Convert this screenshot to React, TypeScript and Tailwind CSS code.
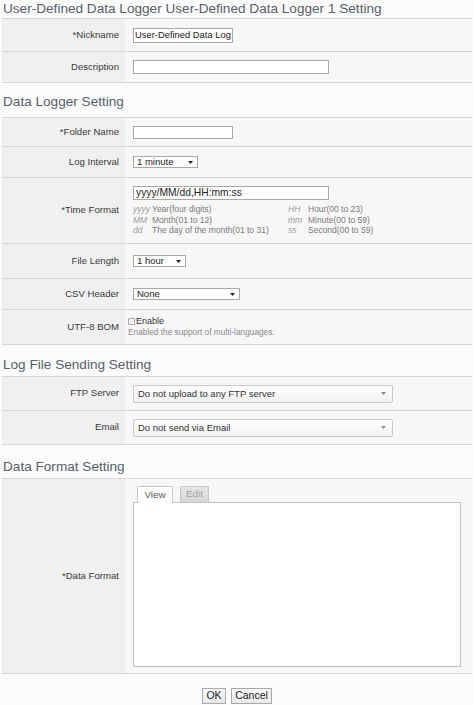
import React from "react";

const font = { fontFamily: '"Liberation Sans", Arial, sans-serif' };

function Row({ label, h, children, pl = "pl-[8px]", items = "items-center" }: { label: string; h: string; children?: React.ReactNode; pl?: string; items?: string }) {
  return (
    <div className={`flex ${h} border-b border-[#d6d6d6]`}>
      <div className="w-[123px] shrink-0 bg-[#f0f0f0] flex items-center justify-end pr-[6px] text-[9.6px] text-[#3a3a3a]">
        {label}
      </div>
      <div className={`flex-1 flex ${items} ${pl} bg-[#f7f7f7]`}>{children}</div>
    </div>
  );
}

function Heading({ text, h, pb }: { text: string; h: string; pb: string }) {
  return (
    <div className={`flex items-end ${h} ${pb} pl-[1px] border-b border-[#d6d6d6] text-[13.6px] leading-none text-[#56606b]`}>
      {text}
    </div>
  );
}

function Arrow({ color }: { color: string }) {
  return (
    <svg width="5" height="3" viewBox="0 0 5 3" className="shrink-0">
      <polygon points="0,0 5,0 2.5,3" fill={color} />
    </svg>
  );
}

function NativeSelect({ w, text }: { w: string; text: string }) {
  return (
    <div className={`${w} h-[12px] bg-white border border-[#a9a9a9] flex items-center justify-between pl-[3px] pr-[4px] text-[9.5px] text-[#222]`}>
      <span className="leading-none">{text}</span>
      <Arrow color="#222" />
    </div>
  );
}

function FancySelect({ text }: { text: string }) {
  return (
    <div className="w-[260px] h-[18px] bg-gradient-to-b from-white to-[#f1f1f1] border border-[#c9c9c9] rounded-[2px] flex items-center justify-between pl-[4px] pr-[6px] text-[9.5px] text-[#333]">
      <span className="leading-none">{text}</span>
      <Arrow color="#888" />
    </div>
  );
}

export default function App() {
  return (
    <div className="w-[474px] h-[705px] bg-[#fbfbfb] pl-[2px] pr-[2px] overflow-hidden" style={font}>
      <div className="h-[19px] flex items-center pl-[1px] border-b border-[#d6d6d6] text-[13.6px] leading-none text-[#56606b]">
        User-Defined Data Logger User-Defined Data Logger 1 Setting
      </div>

      <Row label="*Nickname" h="h-[33px]">
        <div className="w-[100px] h-[15px] bg-white border border-[#a9a9a9] flex items-center pl-[1px] text-[9.4px] text-[#222] overflow-hidden whitespace-nowrap">
          User-Defined Data Log
        </div>
      </Row>
      <Row label="Description" h="h-[31px]">
        <div className="w-[196px] h-[14px] bg-white border border-[#a9a9a9]" />
      </Row>

      <Heading text="Data Logger Setting" h="h-[35px]" pb="pb-[8px]" />

      <Row label="*Folder Name" h="h-[29px]">
        <div className="w-[100px] h-[13px] bg-white border border-[#a9a9a9]" />
      </Row>
      <Row label="Log Interval" h="h-[31px]">
        <NativeSelect w="w-[65px]" text="1 minute" />
      </Row>
      <Row label="*Time Format" h="h-[66px]" items="items-start">
        <div className="pt-[8px] flex flex-col">
          <div className="w-[196px] h-[14px] bg-white border border-[#a9a9a9] flex items-center pl-[2px] text-[10.3px] text-[#222]">
            yyyy/MM/dd,HH:mm:ss
          </div>
          <div className="mt-[4px] grid grid-cols-[19px_136px_20px_auto] text-[8.5px] leading-[10.5px] text-[#7a7a7a] whitespace-nowrap">
            <span className="italic text-[#9a9a9a]">yyyy</span>
            <span>Year(four digits)</span>
            <span className="italic text-[#9a9a9a]">HH</span>
            <span>Hour(00 to 23)</span>
            <span className="italic text-[#9a9a9a]">MM</span>
            <span>Month(01 to 12)</span>
            <span className="italic text-[#9a9a9a]">mm</span>
            <span>Minute(00 to 59)</span>
            <span className="italic text-[#9a9a9a]">dd</span>
            <span>The day of the month(01 to 31)</span>
            <span className="italic text-[#9a9a9a]">ss</span>
            <span>Second(00 to 59)</span>
          </div>
        </div>
      </Row>
      <Row label="File Length" h="h-[35px]">
        <NativeSelect w="w-[53px]" text="1 hour" />
      </Row>
      <Row label="CSV Header" h="h-[31px]">
        <NativeSelect w="w-[107px]" text="None" />
      </Row>
      <Row label="UTF-8 BOM" h="h-[35px]" pl="pl-[3px]">
        <div className="flex flex-col">
          <div className="flex items-center gap-[1px]">
            <span className="w-[7px] h-[7px] border border-[#a8a8a8] bg-[#f2f2f2] rounded-[1px]" />
            <span className="text-[9px] leading-[11px] text-[#333]">Enable</span>
          </div>
          <div className="text-[8.3px] leading-[11px] text-[#8a8a8a]">Enabled the support of multi-languages.</div>
        </div>
      </Row>

      <Heading text="Log File Sending Setting" h="h-[32px]" pb="pb-[4px]" />

      <Row label="FTP Server" h="h-[34px]">
        <FancySelect text="Do not upload to any FTP server" />
      </Row>
      <Row label="Email" h="h-[34px]">
        <FancySelect text="Do not send via Email" />
      </Row>

      <Heading text="Data Format Setting" h="h-[34px]" pb="pb-[4px]" />

      <Row label="*Data Format" h="h-[195px]" items="items-start">
        <div className="pt-[6px] flex flex-col">
          <div className="flex items-end gap-[7px] pl-[4px] h-[17px]">
            <div className="w-[36px] h-[17px] bg-white border border-b-0 border-[#c6c6c6] rounded-t-[2px] flex items-center justify-center text-[9.8px] text-[#555] -mb-[1px] relative">
              View
            </div>
            <div className="w-[29px] h-[16px] bg-gradient-to-b from-[#e6e6e6] to-[#d6d6d6] border border-b-0 border-[#c6c6c6] rounded-t-[2px] flex items-center justify-center text-[9.8px] text-[#a3a3a3]">
              Edit
            </div>
          </div>
          <div className="w-[328px] h-[165px] bg-white border border-[#c0c0c0]" />
        </div>
      </Row>

      <div className="flex justify-center gap-[5px] pt-[14px]">
        <div className="w-[24px] h-[16px] bg-gradient-to-b from-[#fafafa] to-[#e8e8e8] border border-[#a9a9a9] flex items-center justify-center text-[10.5px] text-[#222]">
          OK
        </div>
        <div className="w-[41px] h-[16px] bg-gradient-to-b from-[#fafafa] to-[#e8e8e8] border border-[#a9a9a9] flex items-center justify-center text-[10.5px] text-[#222]">
          Cancel
        </div>
      </div>
    </div>
  );
}
